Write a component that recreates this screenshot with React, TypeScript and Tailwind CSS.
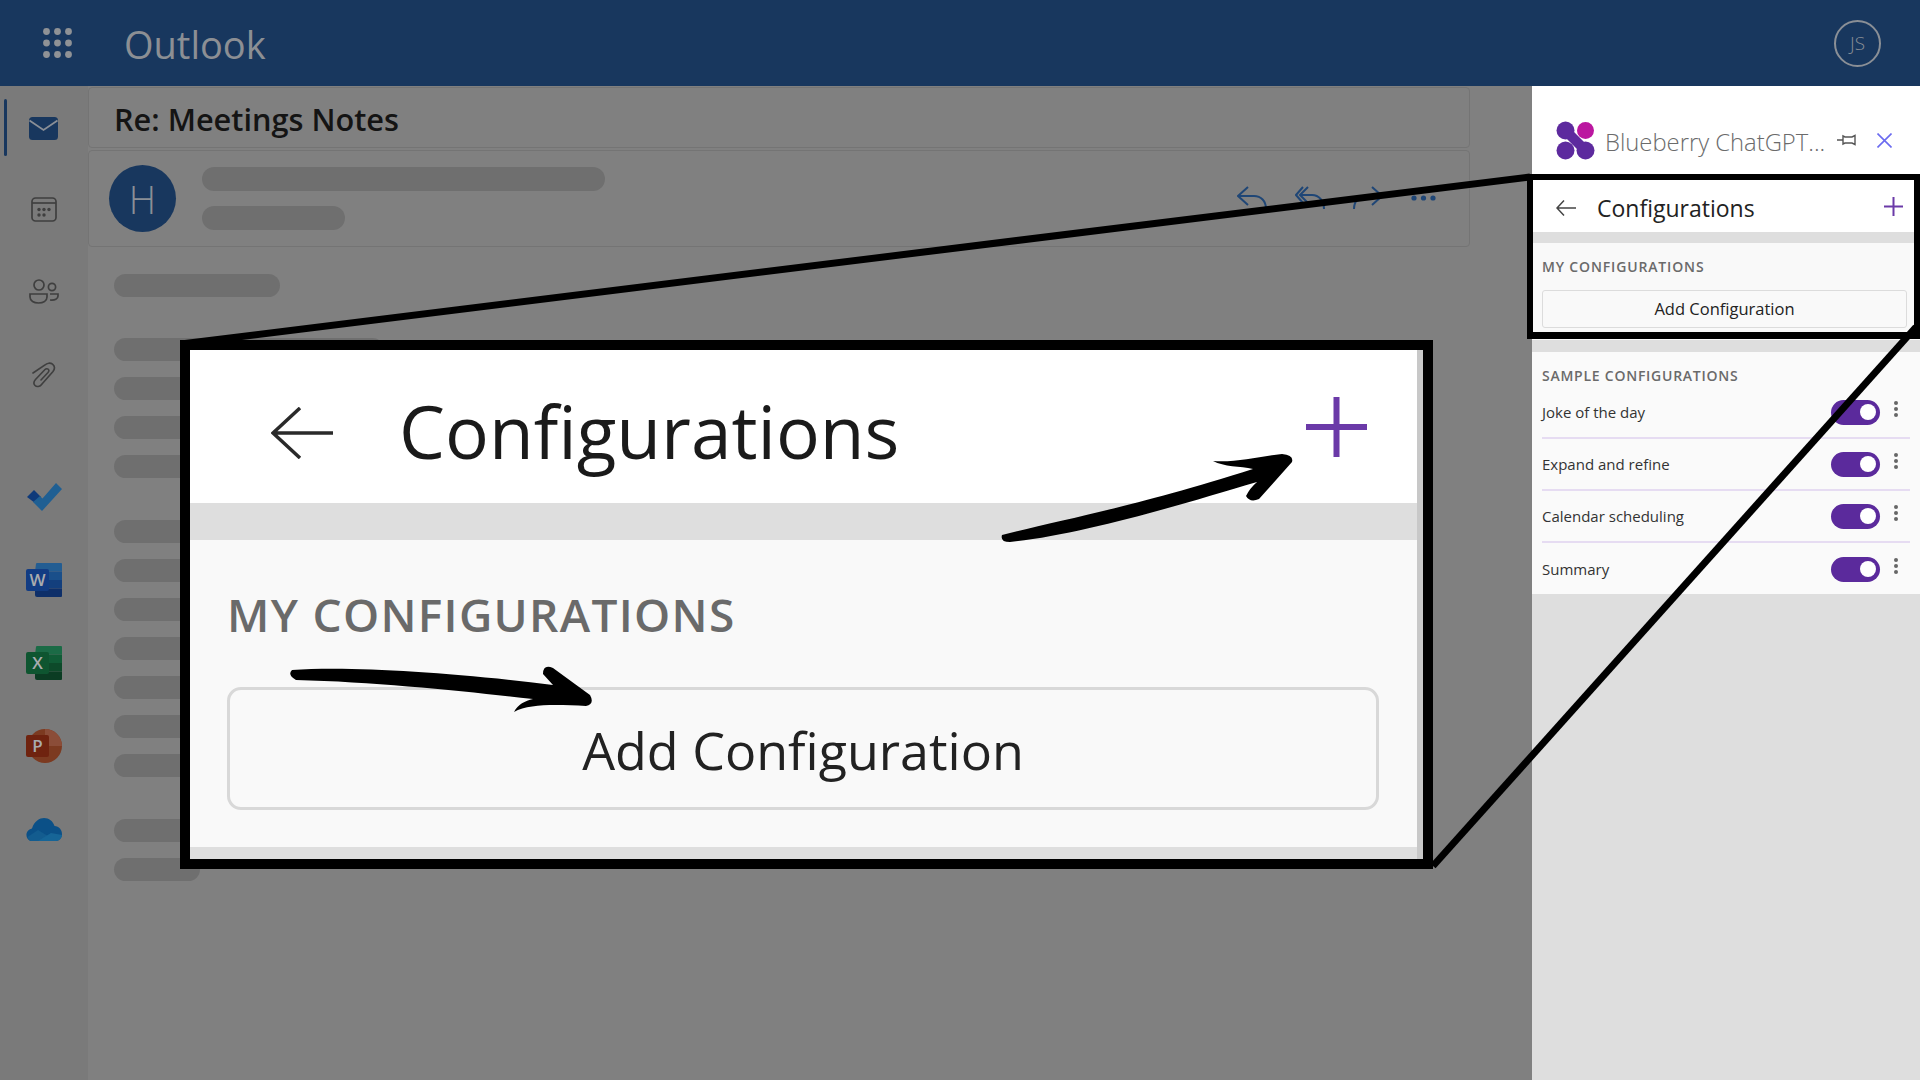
import React from "react";

const font = { fontFamily: '"Open Sans", "Noto Sans", sans-serif' };

function Waffle() {
  const dots = [];
  for (let r = 0; r < 3; r++) for (let c = 0; c < 3; c++) dots.push(<circle key={r + "-" + c} cx={3.5 + c * 11} cy={3.5 + r * 11.5} r={3.4} fill="#8f9296" />);
  return <svg width="30" height="31" viewBox="0 0 30 31">{dots}</svg>;
}

function MailIcon() {
  return (
    <svg width="29" height="23" viewBox="0 0 29 23">
      <rect width="29" height="23" rx="3.5" fill="#18375e" />
      <path d="M0.5 3.5 L14.5 13 L28.5 3.5" fill="none" stroke="#8a8f96" strokeWidth="1.8" />
    </svg>
  );
}
function CalIcon() {
  return (
    <svg width="26" height="25" viewBox="0 0 26 25" fill="none" stroke="#3f3f3f" strokeWidth="1.7">
      <rect x="1" y="1" width="24" height="23" rx="3.5" />
      <path d="M1 6 H25" />
      <g fill="#3f3f3f" stroke="none">
        <circle cx="8" cy="12.5" r="1.7" /><circle cx="13" cy="12.5" r="1.7" /><circle cx="18" cy="12.5" r="1.7" />
        <circle cx="8" cy="18" r="1.7" /><circle cx="13" cy="18" r="1.7" />
      </g>
    </svg>
  );
}
function PeopleIcon() {
  return (
    <svg width="30" height="25" viewBox="0 0 30 25" fill="none" stroke="#3f3f3f" strokeWidth="1.7">
      <circle cx="10" cy="6" r="5" />
      <circle cx="23" cy="8" r="3.6" />
      <path d="M1 15 H18 V18 C18 22 14 24 9.5 24 C5 24 1 22 1 18 Z" />
      <path d="M21 15 H29 V17 C29 20 26 21.5 21 21" />
    </svg>
  );
}
function ClipIcon() {
  return (
    <svg width="24" height="26" viewBox="0 0 24 26" fill="none" stroke="#3f3f3f" strokeWidth="1.6" strokeLinecap="round">
      <path d="M1 11 L13 3 C15 0.8 18.5 0.6 20.5 2.2 C22.8 4 22.8 7 21 9.5 L10 22 C8 25 4.5 25 3 23.5 C1.5 22 1.8 19.5 3.5 17.5 L13 7.5 C14 6.5 15.5 6.5 16.3 7.3 C17 8 17 9.3 16 10.5 L9 18" />
    </svg>
  );
}
function CheckIcon() {
  return (
    <svg width="35" height="28" viewBox="0 0 35 28">
      <path d="M0 14 L7 7 L14 14 L14 20 L8 20 Z" fill="#0f3a7a" />
      <path d="M29 0 L35 6 L15 28 L6 19 L13 13 L15.5 15.5 Z" fill="#1f5f93" />
    </svg>
  );
}
function Sheet({ colors, front, letter }: { colors: string[]; front: string; letter: string }) {
  return (
    <svg width="36" height="34" viewBox="0 0 36 34">
      <g>
        <path d="M10 1 A1 1 0 0 1 11 0 H35 A1 1 0 0 1 36 1 V8.5 H9 Z" fill={colors[0]} />
        <rect x="9" y="8.5" width="27" height="8.5" fill={colors[1]} />
        <rect x="9" y="17" width="27" height="8.5" fill={colors[2]} />
        <path d="M9 25.5 H36 V33 A1 1 0 0 1 35 34 H11 A2 2 0 0 1 9 32 Z" fill={colors[3]} />
      </g>
      <rect x="0" y="6" width="23" height="22" rx="2" fill={front} />
      <text x="11.5" y="23" textAnchor="middle" fontSize="17" fontWeight="600" fill="#a9abae" style={font}>{letter}</text>
    </svg>
  );
}
function PptIcon() {
  return (
    <svg width="36" height="34" viewBox="0 0 36 34">
      <circle cx="19" cy="17" r="17" fill="#7c3a20" />
      <path d="M19 0 A17 17 0 0 1 36 17 H19 Z" fill="#8b4d38" />
      <rect x="0" y="6" width="23" height="22" rx="2" fill="#6f230f" />
      <text x="11.5" y="23" textAnchor="middle" fontSize="17" fontWeight="600" fill="#a9abae" style={font}>P</text>
    </svg>
  );
}
function CloudIcon() {
  return (
    <svg width="36" height="23" viewBox="0 0 36 23">
      <path d="M5 23 C-1 22 -1.5 12 6 10.5 C8 3 14 0 18 0 C23 0 27 3 28.5 8 C33 8 36 12 36 16 C36 20 33 23 30 23 Z" fill="#0b5087" />
      <path d="M1.5 19 L12 12 L30 23 H5 C3.5 23 2.3 21 1.5 19 Z" fill="#135c8f" />
      <path d="M12 23 L25 15 L36 17 C36 20 33 23 30 23 Z" fill="#166597" />
    </svg>
  );
}

function Logo() {
  return (
    <svg width="39" height="39" viewBox="0 0 39 39">
      <path d="M9.5 9.5 L29.5 29.5" stroke="#5d2a9e" strokeWidth="10" fill="none" />
      <circle cx="9.5" cy="9.5" r="9" fill="#5d2a9e" />
      <circle cx="9.5" cy="29.5" r="9" fill="#5d2a9e" />
      <circle cx="29.5" cy="29.5" r="9" fill="#5d2a9e" />
      <circle cx="29.5" cy="9.5" r="8.5" fill="#bb17a0" />
    </svg>
  );
}

function Toggle() {
  return (
    <div className="w-[49px] h-[25px] rounded-full bg-[#5b2a9c] flex items-center justify-end pr-[4px]">
      <div className="w-[16px] h-[16px] rounded-full bg-white" />
    </div>
  );
}
function Kebab() {
  return (
    <div className="flex flex-col gap-[2px] -mt-[6px]">
      <div className="w-[4px] h-[4px] rounded-full bg-[#666]" />
      <div className="w-[4px] h-[4px] rounded-full bg-[#666]" />
      <div className="w-[4px] h-[4px] rounded-full bg-[#666]" />
    </div>
  );
}

function SampleRow({ label, last }: { label: string; last?: boolean }) {
  return (
    <div className={"h-[52px] flex items-center mr-[10px] " + (last ? "" : "border-b-2 border-[#e6dcf2]")}>
      <span className="flex-1 pt-[1px] text-[15px] text-[#333]">{label}</span>
      <Toggle />
      <div className="w-[30px] flex justify-center pl-[2px]"><Kebab /></div>
    </div>
  );
}

function Skeleton({ className }: { className: string }) {
  return <div className={"h-[23px] rounded-full bg-[#6f6f6f] " + className} />;
}

export default function App() {
  return (
    <div className="relative w-[1920px] h-[1080px] overflow-hidden flex flex-col bg-[#808080]" style={font}>
      <header className="h-[86px] shrink-0 bg-[#18375e] flex items-center pr-[39px]">
        <div className="ml-[43px] w-[81px]"><Waffle /></div>
        <span className="text-[38px] leading-none text-[#8c8f94] mt-[2px]">Outlook</span>
        <div className="ml-auto w-[47px] h-[47px] rounded-full border-2 border-[#8a8f96] flex items-center justify-center text-[19px] font-light text-[#8a8f96]">JS</div>
      </header>

      <div className="flex-1 flex min-h-0">
        <nav className="relative w-[88px] shrink-0 bg-[#7a7a7a] flex flex-col items-center">
          <div className="absolute left-[4px] top-[13px] w-[3px] h-[57px] rounded-full bg-[#18375e]" />
          <div className="mt-[31px] mr-[2px] flex"><MailIcon /></div>
          <div className="mt-[57px] flex"><CalIcon /></div>
          <div className="mt-[57px] flex"><PeopleIcon /></div>
          <div className="mt-[58px] flex"><ClipIcon /></div>
          <div className="mt-[95px] flex"><CheckIcon /></div>
          <div className="mt-[52px] flex"><Sheet colors={["#235d92", "#1a4f8a", "#133f7d", "#0e2f69"]} front="#123c83" letter="W" /></div>
          <div className="mt-[49px] flex"><Sheet colors={["#1b6b46", "#105c36", "#0d4a2a", "#0b3c23"]} front="#0e5530" letter="X" /></div>
          <div className="mt-[49px] flex"><PptIcon /></div>
          <div className="mt-[55px] flex"><CloudIcon /></div>
        </nav>

        <main className="flex-1 min-w-0 pt-[1px]">
          <div className="mr-[62px] h-[61px] rounded-[4px] border border-[#747474] flex items-center pl-[25px] pt-[4px]">
            <h1 className="text-[30.7px] font-semibold text-[#141414] leading-none">Re: Meetings Notes</h1>
          </div>
          <div className="mr-[62px] mt-[2px] h-[97px] rounded-[4px] border border-[#747474] flex items-center pl-[20px] pr-[33px]">
            <div className="w-[67px] h-[67px] rounded-full bg-[#18375e] flex items-center justify-center text-[38px] font-light text-[#8a8f96] leading-none">H</div>
            <div className="ml-[26px] flex flex-col gap-[15px]">
              <div className="w-[403px] h-[24px] rounded-full bg-[#6f6f6f]" />
              <div className="w-[143px] h-[24px] rounded-full bg-[#6f6f6f]" />
            </div>
            <div className="ml-auto flex items-center gap-[28px] text-[#1f4676] -mt-[2px]">
              <svg width="30" height="24" viewBox="0 0 30 24" fill="none" stroke="currentColor" strokeWidth="2"><path d="M11 1 L1 10 L11 19 M1 10 H17 C24 10 29 15 29 23" /></svg>
              <svg width="30" height="24" viewBox="0 0 30 24" fill="none" stroke="currentColor" strokeWidth="2"><path d="M8 1 L1 9 L8 17 M13 1 L5 9 L13 17 M5 9 H17 C24 9 29 15 29 23" /></svg>
              <svg width="30" height="24" viewBox="0 0 30 24" fill="none" stroke="currentColor" strokeWidth="2"><path d="M19 1 L29 10 L19 19 M29 10 H13 C6 10 1 15 1 23" /></svg>
              <svg width="25" height="6" viewBox="0 0 25 6" fill="currentColor"><circle cx="3" cy="3" r="2.6" /><circle cx="12.5" cy="3" r="2.6" /><circle cx="22" cy="3" r="2.6" /></svg>
            </div>
          </div>
          <div className="pl-[26px] pt-[27px] flex flex-col">
            <Skeleton className="w-[166px]" />
            <div className="mt-[41px] flex flex-col gap-[16px]">
              {[0, 1, 2, 3].map((i) => <Skeleton key={i} className="w-[270px]" />)}
            </div>
            <div className="mt-[42px] flex flex-col gap-[16px]">
              {[0, 1, 2, 3, 4, 5, 6].map((i) => <Skeleton key={i} className="w-[270px]" />)}
            </div>
            <div className="mt-[42px] flex flex-col gap-[16px]">
              <Skeleton className="w-[86px]" />
              <Skeleton className="w-[86px]" />
            </div>
          </div>
        </main>

        <aside className="w-[388px] shrink-0 bg-[#dedede] flex flex-col">
          <div className="h-[94px] bg-white flex items-start pl-[24px] pt-[35px]">
            <Logo />
            <span className="ml-[10px] mt-[5px] text-[23.8px] leading-[32px] font-light text-[#6b6b6b] whitespace-nowrap">Blueberry ChatGPT...</span>
            <svg className="ml-[12px] mt-[13px]" width="19" height="12" viewBox="0 0 19 12" fill="none" stroke="#555" strokeWidth="1.4"><path d="M0 6 H6 M6 2 L8 3 H15 L18 1.5 V10.5 L15 9 H8 L6 10 Z" /></svg>
            <svg className="ml-[21px] mt-[12px]" width="15" height="15" viewBox="0 0 15 15" fill="none" stroke="#6b6bf0" strokeWidth="1.6"><path d="M0.5 0.5 L14.5 14.5 M14.5 0.5 L0.5 14.5" /></svg>
          </div>
          <div className="h-[52px] bg-white flex items-center pl-[24px] pr-[17px]">
            <svg className="mt-[4px]" width="20" height="16" viewBox="0 0 20 16" fill="none" stroke="#444" strokeWidth="1.5"><path d="M8 0.5 L1 8 L8 15.5 M1 8 H20" /></svg>
            <span className="ml-[21px] text-[23px] leading-none text-[#222] mt-[4px]">Configurations</span>
            <svg className="ml-auto" width="19" height="19" viewBox="0 0 19 19" fill="none" stroke="#6b3aa8" strokeWidth="2"><path d="M9.5 0 V19 M0 9.5 H19" /></svg>
          </div>
          <div className="mt-[11px] h-[97px] bg-[#f9f9f9] pl-[10px] pr-[13px] pt-[14px]">
            <div className="text-[14px] font-semibold tracking-[0.85px] leading-[20px] text-[#6a6a6a]">MY CONFIGURATIONS</div>
            <div className="mt-[13px] h-[38px] rounded-[3px] border border-[#dcdcdc] flex items-center justify-center pt-[1px] text-[16.5px] text-[#222]">Add Configuration</div>
          </div>
          <div className="mt-[12px] h-[242px] bg-[#fafafa] pl-[10px]">
            <div className="pt-[14px] h-[35px] text-[14px] font-semibold tracking-[0.75px] leading-[20px] text-[#6a6a6a]">SAMPLE CONFIGURATIONS</div>
            <SampleRow label="Joke of the day" />
            <SampleRow label="Expand and refine" />
            <SampleRow label="Calendar scheduling" />
            <SampleRow label="Summary" last />
          </div>
        </aside>
      </div>

      {/* small highlight frame around the panel section */}
      <div className="absolute left-[1527px] top-[174px] w-[393px] h-[165px] border-x-[6px] border-t-[6px] border-b-[7px] border-black" />

      {/* enlarged callout */}
      <div className="absolute left-[180px] top-[340px] w-[1253px] h-[529px] border-[10px] border-black bg-white flex">
        <div className="flex-1 flex flex-col">
          <div className="h-[153px] bg-white flex items-center relative pl-[81px]">
            <svg className="mt-[12px]" width="62" height="52" viewBox="0 0 62 52" fill="none" stroke="#2a2a2a" strokeWidth="3.5"><path d="M29 1 L2 26 L29 51 M2 26 H62" /></svg>
            <span className="ml-[66px] pt-[7px] text-[73px] leading-none text-[#1a1a1a]">Configurations</span>
            <svg className="absolute left-[1116px] top-[47px]" width="61" height="60" viewBox="0 0 61 60" fill="none" stroke="#6b3aa8" strokeWidth="6"><path d="M30.5 0 V60 M0 30 H61" /></svg>
          </div>
          <div className="h-[37px] bg-[#dedede]" />
          <div className="h-[307px] bg-[#f9f9f9] pl-[37px] pr-[38px] pt-[39px]">
            <div className="text-[46px] leading-[70px] font-semibold tracking-[1.3px] text-[#6a6a6a] whitespace-nowrap">MY CONFIGURATIONS</div>
            <div className="mt-[38px] h-[123px] rounded-[14px] border-[3px] border-[#d8d8d8] flex items-center justify-center pt-[3px] text-[52px] leading-none text-[#222]">Add Configuration</div>
          </div>
          <div className="flex-1 bg-[#dedede]" />
        </div>
        <div className="w-[6px] bg-[#c8c8c8]" />
      </div>

      {/* callout connector lines and hand-drawn arrows */}
      <svg className="absolute left-0 top-0 pointer-events-none" width="1920" height="1080" viewBox="0 0 1920 1080">
        <path d="M181 344 L1530 177" stroke="#000" strokeWidth="7" fill="none" />
        <path d="M1433 866 L1916 327" stroke="#000" strokeWidth="7" fill="none" />
        <path d="M292 670 C350 666 450 672 553 685 L543 674 Q543 664 553 668 L590 695 Q595 704 586 706 C560 705 530 703 514 712 C518 704 525 701 533 699 C470 692 380 682 296 680 Q287 675 292 670 Z" fill="#000" />
        <path d="M1002 535 C1060 520 1130 508 1253 469 C1240 466 1224 467 1213 461 C1235 463 1260 456 1282 454 Q1294 455 1292 462 L1259 499 Q1250 503 1246 496 Q1250 488 1257 482 C1180 505 1080 535 1010 542 Q1000 542 1002 535 Z" fill="#000" />
      </svg>
    </div>
  );
}
